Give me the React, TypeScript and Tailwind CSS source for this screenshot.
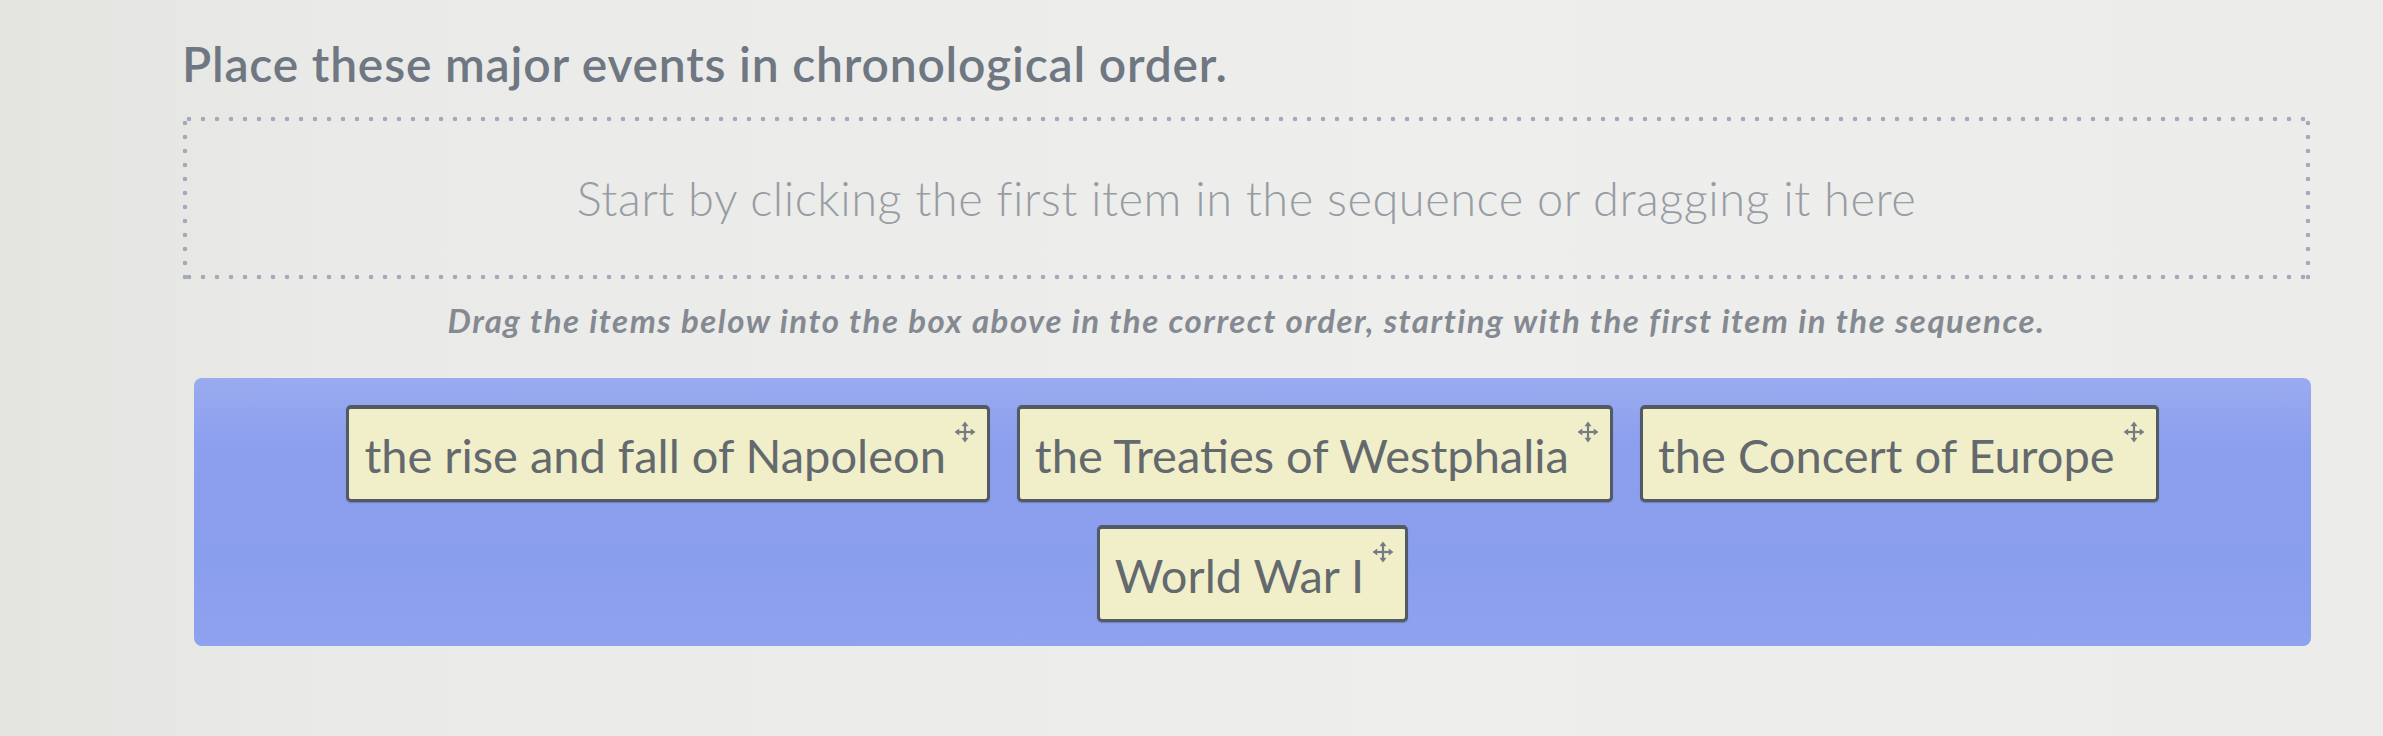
import React from "react";

const items = [
  "the rise and fall of Napoleon",
  "the Treaties of Westphalia",
  "the Concert of Europe",
  "World War I",
];

function MoveIcon() {
  return (
    <svg
      viewBox="0 0 20 20"
      className="w-[22px] h-[22px] shrink-0 mt-[-7px] ml-[8px]"
      fill="#767b84"
      stroke="#767b84"
      strokeWidth="2"
    >
      <line x1="10" y1="4" x2="10" y2="16" />
      <line x1="4" y1="10" x2="16" y2="10" />
      <path d="M10 0.5 L13.2 4.8 L6.8 4.8 Z" stroke="none" />
      <path d="M10 19.5 L13.2 15.2 L6.8 15.2 Z" stroke="none" />
      <path d="M0.5 10 L4.8 6.8 L4.8 13.2 Z" stroke="none" />
      <path d="M19.5 10 L15.2 6.8 L15.2 13.2 Z" stroke="none" />
    </svg>
  );
}

function Chip({ label }: { label: string }) {
  return (
    <div className="flex items-start bg-[#f1efc9] border-[3px] border-[#525a64] border-t-[4px] rounded-[5px] pl-[15px] pr-[11px] pt-[19px] pb-[16px] shadow-[0_1px_1px_rgba(40,45,60,0.3)]">
      <span className="text-[47px] leading-[55px] text-[#64696e] whitespace-nowrap">
        {label}
      </span>
      <MoveIcon />
    </div>
  );
}

export default function App() {
  return (
    <div
      className="w-[2383px] h-[736px] overflow-hidden bg-[linear-gradient(90deg,#e4e5e1_0%,#eaebe8_15%,#eeefec_60%,#ecedea_100%)]"
      style={{ fontFamily: "Lato, 'Noto Sans', sans-serif" }}
    >
      <div className="ml-[182px] w-[2129px] pt-[36px]">
        <h1 className="text-[48px] leading-[56px] font-semibold text-[#6f7782] tracking-[0.8px]">
          Place these major events in chronological order.
        </h1>

        {/* drop target with a dotted outline */}
        <div className="mt-[24px] h-[164px] flex items-center justify-center [background-image:radial-gradient(circle,#a3aabb_2px,transparent_2.6px),radial-gradient(circle,#a3aabb_2px,transparent_2.6px),radial-gradient(circle,#a3aabb_2px,transparent_2.6px),radial-gradient(circle,#a3aabb_2px,transparent_2.6px)] [background-size:14px_6px,14px_6px,6px_14px,6px_14px] [background-position:0_0,0_100%,0_0,100%_0] [background-repeat:repeat-x,repeat-x,repeat-y,repeat-y]">
          <span className="text-[47px] font-light text-[#989ca4] tracking-[0.5px]">
            Start by clicking the first item in the sequence or dragging it here
          </span>
        </div>

        <p className="mt-[22px] text-center text-[33px] leading-[37px] font-bold italic text-[#858a92] tracking-[1.5px]">
          Drag the items below into the box above in the correct order, starting with the first item in the sequence.
        </p>

        <div className="mt-[39px] ml-[12px] w-[2117px] h-[268px] rounded-[8px] bg-[linear-gradient(180deg,#9aabef_0%,#8c9fee_25%,#8a9eee_70%,#8ea2ef_100%)] pt-[27px] pb-[27px] flex flex-wrap justify-center content-start gap-x-[27px] gap-y-[23px] px-[60px]">
          {items.map((label) => (
            <Chip key={label} label={label} />
          ))}
        </div>
      </div>
    </div>
  );
}
